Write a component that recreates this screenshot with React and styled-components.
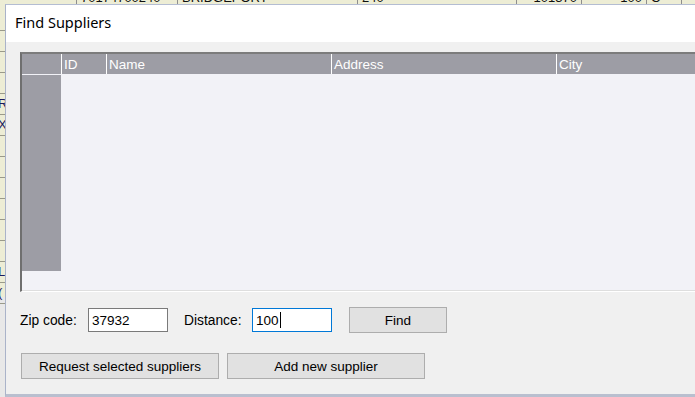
import styled, { createGlobalStyle } from "styled-components";

const GlobalStyle = createGlobalStyle`
  html, body {
    margin: 0;
    padding: 0;
    width: 695px;
    height: 397px;
    overflow: hidden;
    background: #f0f0f0;
  }
  * { box-sizing: border-box; }
`;

const backRow = [
  { w: 77, text: "" },
  { w: 101, text: "70174700240" },
  { w: 180, text: "BRIDGEPORT" },
  { w: 159, text: "240" },
  { w: 65, text: "101370", right: true },
  { w: 65, text: "100", right: true },
  { w: 35, text: "C" },
  { w: 30, text: "" },
];

const leftRows = ["", "", "", "", "R", "X", "", "", "", "", "", "", "L", "("];

const columns = [
  { name: "ID", w: 45 },
  { name: "Name", w: 225 },
  { name: "Address", w: 225 },
  { name: "City", w: 200 },
];

export default function App() {
  return (
    <>
      <GlobalStyle />
      <Desktop>
        <TopStrip>
          {backRow.map((c, i) => (
            <BackCell key={i} style={{ width: c.w }} $right={c.right}>
              <span>{c.text}</span>
            </BackCell>
          ))}
        </TopStrip>
        <Middle>
          <LeftStrip>
            <LeftRows>
              {leftRows.map((t, i) => (
                <LeftCell key={i}>{t}</LeftCell>
              ))}
            </LeftRows>
          </LeftStrip>
          <Dialog>
            <TitleBar>Find Suppliers</TitleBar>
            <Body>
              <Grid>
                <HeaderRow>
                  <RowHeadCorner />
                  {columns.map((c) => (
                    <HeaderCell key={c.name} style={{ width: c.w }}>
                      {c.name}
                    </HeaderCell>
                  ))}
                </HeaderRow>
                <GridBody>
                  <RowHeadColumn />
                </GridBody>
              </Grid>

              <FormRow>
                <Label>Zip code:</Label>
                <TextBox>37932</TextBox>
                <Label $gap>Distance:</Label>
                <TextBox $focused>
                  100
                  <Caret />
                </TextBox>
                <Button $w={98} $ml={17}>Find</Button>
              </FormRow>

              <ButtonRow>
                <Button $w={198}>Request selected suppliers</Button>
                <Button $w={198}>Add new supplier</Button>
              </ButtonRow>
            </Body>
          </Dialog>
        </Middle>
      </Desktop>
    </>
  );
}

const Desktop = styled.div`
  width: 695px;
  height: 397px;
  display: flex;
  flex-direction: column;
  background: #eeeed8;
  font-family: "Liberation Sans", Arial, sans-serif;
`;

const TopStrip = styled.div`
  height: 4px;
  display: flex;
  overflow: hidden;
  background: #ededd5;
`;

const BackCell = styled.div`
  flex: none;
  height: 4px;
  border-right: 1px solid #8e8e8e;
  overflow: hidden;
  padding: 0 4px;
  text-align: ${({ $right }) => ($right ? "right" : "left")};
  font-size: 13px;
  line-height: 13px;
  color: #111;

  span {
    display: block;
    margin-top: -9px;
  }
`;

const Middle = styled.div`
  flex: 1;
  display: flex;
  min-height: 0;
`;

const LeftStrip = styled.div`
  width: 5px;
  flex: none;
  background: linear-gradient(#ededd5 0 293px, #e8e8e8 293px);
  overflow: hidden;
`;

const LeftRows = styled.div`
  margin-top: 6px;
  display: flex;
  flex-direction: column;
`;

const LeftCell = styled.div`
  height: 21px;
  border-bottom: 1px solid #9a9a8a;
  font-size: 13px;
  line-height: 20px;
  margin-left: -2px;
  color: #1a1a60;
  overflow: hidden;
`;

const Dialog = styled.div`
  flex: 1;
  display: flex;
  flex-direction: column;
  border-top: 1px solid #b4bdd2;
  border-left: 1px solid #aab3c9;
  border-bottom: 3px solid #b9bfcf;
  background: #f0f0f0;
`;

const TitleBar = styled.div`
  height: 37px;
  flex: none;
  background: #ffffff;
  padding: 7px 0 0 9px;
  font-family: "Noto Sans", "Open Sans", sans-serif;
  font-size: 14.5px;
  line-height: 20px;
  color: #000;
`;

const Body = styled.div`
  flex: 1;
  display: flex;
  flex-direction: column;
  padding: 10px 0 0 14px;
`;

const Grid = styled.div`
  height: 240px;
  flex: none;
  display: flex;
  flex-direction: column;
  border-top: 2px solid #7c7c7c;
  border-left: 2px solid #6f6f6f;
  border-bottom: 1px solid #ffffff;
  box-shadow: inset 0 -1px 0 #dedede;
  background: #f2f2f7;
  overflow: hidden;
`;

const HeaderRow = styled.div`
  height: 21px;
  flex: none;
  display: flex;
  background: #9d9da5;
  border-bottom: 1px solid #f2f2f7;
`;

const RowHeadCorner = styled.div`
  width: 40px;
  flex: none;
  border-right: 1px solid #ffffff;
`;

const HeaderCell = styled.div`
  flex: none;
  border-right: 1px solid #ffffff;
  padding-left: 2px;
  color: #ffffff;
  font-size: 13.5px;
  line-height: 21px;
  white-space: nowrap;
`;

const GridBody = styled.div`
  flex: 1;
  display: flex;
  align-items: flex-start;
`;

const RowHeadColumn = styled.div`
  width: 39px;
  height: 196px;
  background: #9d9da5;
`;

const FormRow = styled.div`
  margin-top: 15px;
  height: 26px;
  display: flex;
  align-items: center;
`;

const Label = styled.div`
  width: 68px;
  flex: none;
  margin-left: ${({ $gap }) => ($gap ? "16px" : "0")};
  font-size: 13.8px;
  color: #000;
  padding-top: 1px;
`;

const TextBox = styled.div`
  width: 80px;
  height: 24px;
  flex: none;
  display: flex;
  align-items: center;
  background: #ffffff;
  border: 1px solid ${({ $focused }) => ($focused ? "#0078d7" : "#7a7a7a")};
  padding: 0 0 0 3px;
  font-size: 13.5px;
  color: #000;
`;

const Caret = styled.span`
  display: inline-block;
  width: 1px;
  height: 16px;
  margin-left: 1px;
  background: #000;
`;

const ButtonRow = styled.div`
  margin-top: 20px;
  margin-left: 1px;
  display: flex;
  gap: 8px;
`;

const Button = styled.button`
  width: ${({ $w }) => $w}px;
  height: 26px;
  margin-left: ${({ $ml }) => ($ml ? `${$ml}px` : "0")};
  flex: none;
  background: #e1e1e1;
  border: 1px solid #adadad;
  border-radius: 0;
  padding: 0;
  font-family: "Liberation Sans", Arial, sans-serif;
  font-size: 13.5px;
  color: #000;
`;
